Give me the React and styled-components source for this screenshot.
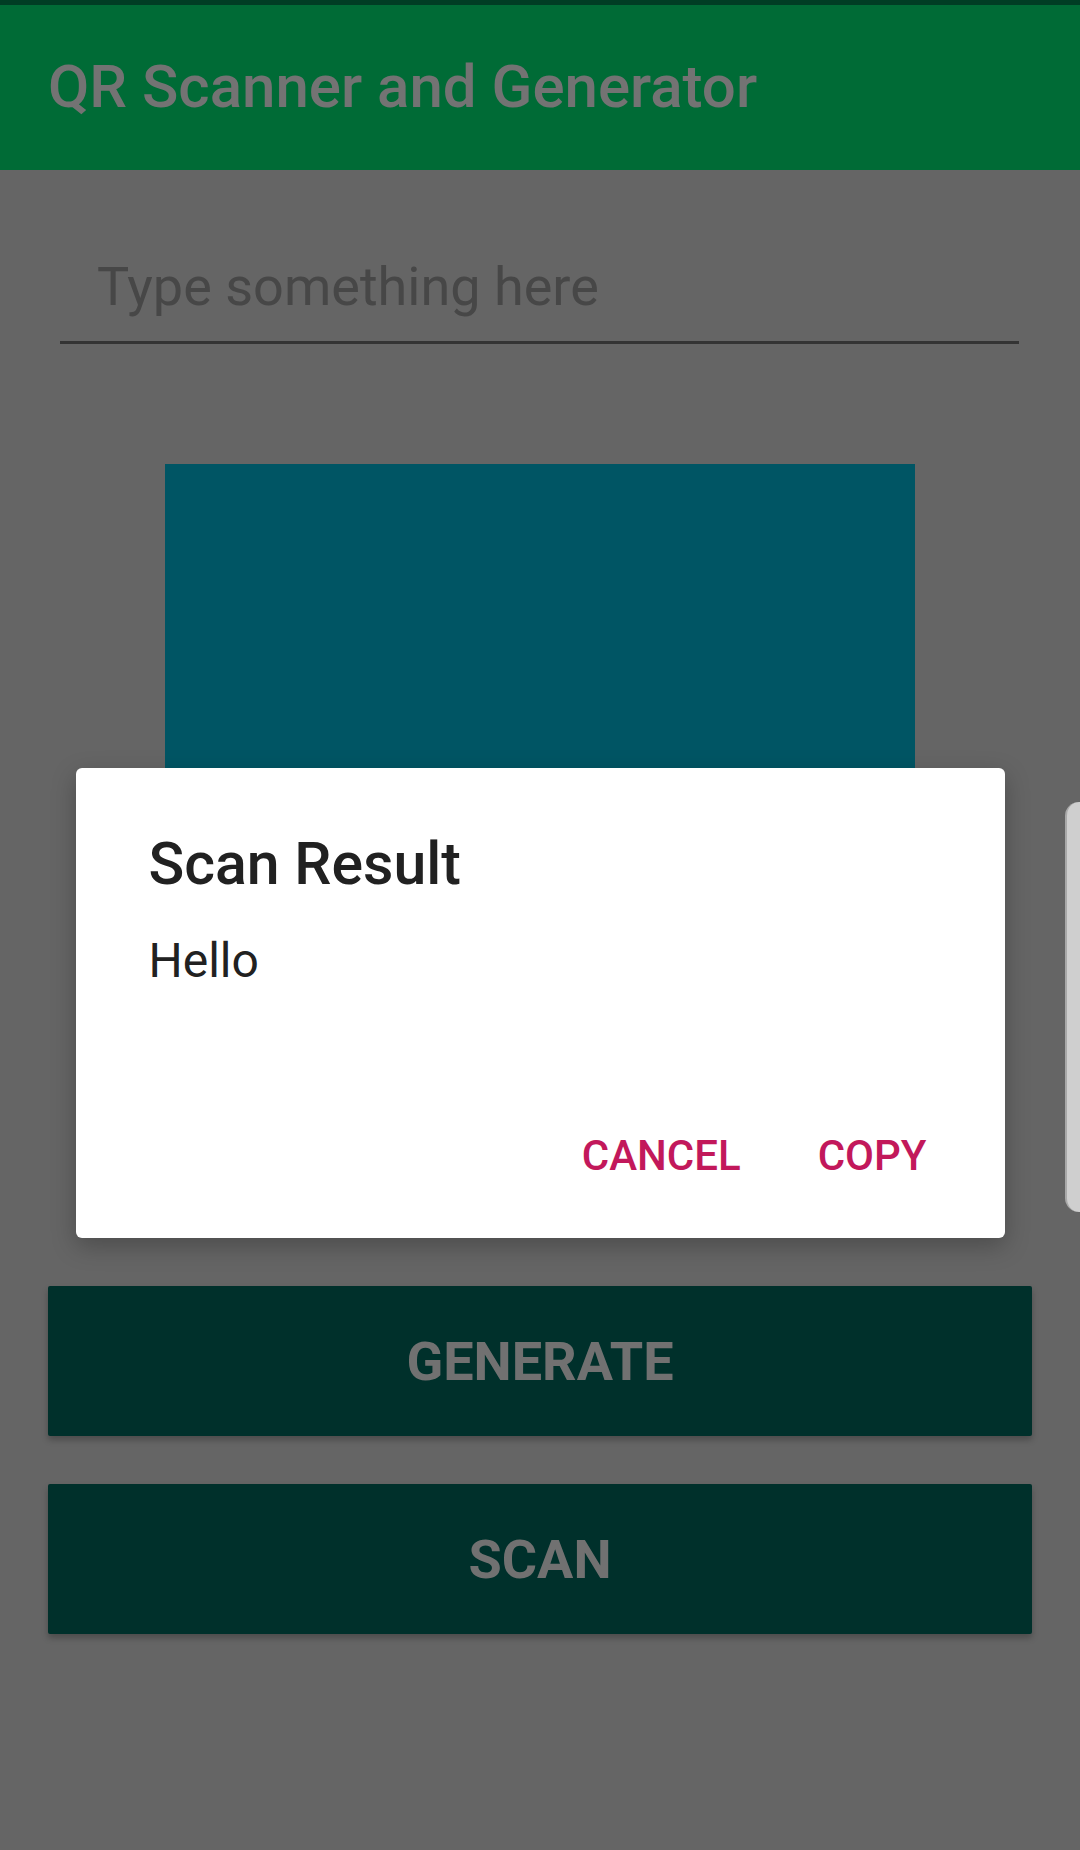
import styled, { createGlobalStyle } from "styled-components";

// dimmed palette: everything under the dialog sits behind the scrim
const GlobalStyle = createGlobalStyle`
  html, body {
    margin: 0;
    padding: 0;
    background: #656565;
  }
  body {
    font-family: Roboto, "Noto Sans", "Liberation Sans", sans-serif;
  }
  * {
    box-sizing: border-box;
  }
`;

const Screen = styled.div`
  position: relative;
  width: 1080px;
  min-height: 1850px;
  background: #656565;
  overflow: hidden;
`;

const AppBar = styled.header`
  height: 170px;
  background: #006b36;
  border-top: 5px solid #003d24;
  padding: 47px 0 0 48px;
`;

const AppTitle = styled.h1`
  margin: 0;
  font-size: 60px;
  line-height: 70px;
  font-weight: 500;
  color: #737373;
`;

const Content = styled.main`
  display: flex;
  flex-direction: column;
  align-items: center;
`;

const Field = styled.div`
  align-self: stretch;
  margin: 85px 61px 0 60px;
  padding: 0 0 22px 37px;
  border-bottom: 3px solid #343434;
  font-size: 54px;
  line-height: 64px;
  color: #474747;
`;

const QrBox = styled.div`
  width: 750px;
  height: 750px;
  margin-top: 120px;
  background: #005564;
`;

const ActionButton = styled.button`
  display: flex;
  align-items: center;
  justify-content: center;
  align-self: stretch;
  height: 150px;
  margin: ${(p) => p.$top}px 48px 0;
  padding: 0;
  border: none;
  border-radius: 2px;
  background: #00302b;
  box-shadow: 0 4px 6px rgba(0, 0, 0, 0.25);
  font-family: Roboto, "Liberation Sans", sans-serif;
  font-size: 54px;
  font-weight: 700;
  color: #717171;
`;

const Scrim = styled.div`
  position: absolute;
  inset: 0;
`;

const Dialog = styled.div`
  width: 929px;
  height: 470px;
  margin: 768px auto 0;
  padding: 61px 78px 0 73px;
  background: #ffffff;
  border-radius: 6px;
  box-shadow: 0 8px 24px rgba(0, 0, 0, 0.25);
  display: flex;
  flex-direction: column;
`;

const DialogTitle = styled.h2`
  margin: 0;
  font-size: 59px;
  line-height: 70px;
  font-weight: 500;
  color: #212121;
`;

const DialogText = styled.p`
  margin: 34px 0 0;
  font-size: 48px;
  line-height: 56px;
  color: #212121;
`;

const DialogActions = styled.div`
  display: flex;
  justify-content: flex-end;
  gap: 77px;
  margin-top: 142px;
`;

const TextButton = styled.span`
  font-size: 42px;
  line-height: 50px;
  font-weight: 500;
  color: #c2185b;
`;

const EdgeHandle = styled.div`
  position: absolute;
  right: 0;
  top: 802px;
  width: 15px;
  height: 410px;
  background: #cfcfcf;
  border-left: 2px solid #a9a9a9;
  border-radius: 14px 0 0 14px;
`;

export default function App() {
  return (
    <>
      <GlobalStyle />
      <Screen>
        <AppBar>
          <AppTitle>QR Scanner and Generator</AppTitle>
        </AppBar>
        <Content>
          <Field>Type something here</Field>
          <QrBox />
          <ActionButton $top={72}>GENERATE</ActionButton>
          <ActionButton $top={48}>SCAN</ActionButton>
        </Content>
        <Scrim>
          <Dialog>
            <DialogTitle>Scan Result</DialogTitle>
            <DialogText>Hello</DialogText>
            <DialogActions>
              <TextButton>CANCEL</TextButton>
              <TextButton>COPY</TextButton>
            </DialogActions>
          </Dialog>
        </Scrim>
        <EdgeHandle />
      </Screen>
    </>
  );
}
